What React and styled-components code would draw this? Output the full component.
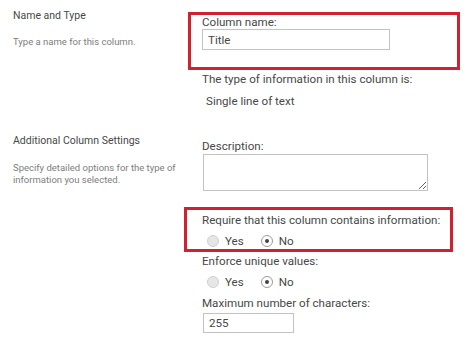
import React from 'react';
import styled, { createGlobalStyle } from 'styled-components';

const GlobalStyle = createGlobalStyle`
  html, body {
    margin: 0;
    padding: 0;
    background: #ffffff;
  }
  body {
    font-family: Roboto, "Open Sans", sans-serif;
    color: #444444;
  }
`;

const Page = styled.div`
  width: 474px;
  height: 348px;
  overflow: hidden;
`;

const Section = styled.section`
  display: grid;
  grid-template-columns: 184px 1fr;
  margin-top: ${(p) => p.$offset || 0}px;
`;

const SideColumn = styled.div`
  padding: ${(p) => p.$top || 0}px 0 0 13px;
`;

const SideTitle = styled.div`
  font-size: 10.5px;
  line-height: 16px;
  color: #474747;
`;

const SideText = styled.div`
  margin-top: ${(p) => p.$gap}px;
  font-size: 9.5px;
  line-height: 11.5px;
  color: #7d7d7d;
  width: 170px;
`;

const FieldColumn = styled.div`
  display: flex;
  flex-direction: column;
  align-items: flex-start;
  padding-top: ${(p) => p.$top || 0}px;
`;

const Highlight = styled.div`
  display: flex;
  flex-direction: column;
  align-items: flex-start;
  box-sizing: border-box;
  width: ${(p) => p.$width}px;
  margin: ${(p) => p.$gap || 0}px 0 0 ${(p) => p.$shift || 0}px;
  padding: ${(p) => p.$pad};
  border: 3px solid #d1202f;
`;

const Label = styled.div`
  font-size: 11.6px;
  line-height: ${(p) => p.$lh || 16}px;
  margin-top: ${(p) => p.$gap || 0}px;
  padding-left: ${(p) => p.$indent || 0}px;
  color: #474747;
  white-space: nowrap;
`;

const TextBox = styled.input`
  box-sizing: border-box;
  width: ${(p) => p.$width}px;
  height: ${(p) => p.$height}px;
  margin: ${(p) => p.$gap || 0}px 0 0 ${(p) => p.$indent || 0}px;
  padding: 0 5px;
  border: 1px solid #c2c2c2;
  font-family: Roboto, "Open Sans", sans-serif;
  font-size: 11.6px;
  color: #474747;
  background: #ffffff;
  outline: none;
`;

const TextArea = styled.textarea`
  box-sizing: border-box;
  width: 225px;
  height: 37px;
  margin: 0 0 0 19px;
  padding: 3px 5px;
  border: 1px solid #c2c2c2;
  font-family: Roboto, "Open Sans", sans-serif;
  font-size: 11.6px;
  resize: both;
  outline: none;
`;

const RadioRow = styled.div`
  display: flex;
  align-items: center;
  height: 16px;
  margin-top: 5px;
  padding-left: ${(p) => p.$indent}px;
`;

const RadioOption = styled.label`
  display: flex;
  align-items: center;
  gap: 6px;
  margin-right: 17px;
  font-size: 11.6px;
  color: #474747;
`;

const RadioDot = styled.span`
  position: relative;
  box-sizing: border-box;
  width: 12px;
  height: 12px;
  border-radius: 50%;
  border: 1px solid ${(p) => (p.$on ? '#9a9a9a' : '#cfcfcf')};
  background: ${(p) => (p.$on ? '#ffffff' : '#e6e6e6')};

  &::after {
    content: '';
    display: ${(p) => (p.$on ? 'block' : 'none')};
    position: absolute;
    left: 3px;
    top: 3px;
    width: 4px;
    height: 4px;
    border-radius: 50%;
    background: #444444;
  }
`;

const YesNo = ({ indent }) => (
  <RadioRow $indent={indent}>
    <RadioOption>
      <RadioDot />
      Yes
    </RadioOption>
    <RadioOption>
      <RadioDot $on />
      No
    </RadioOption>
  </RadioRow>
);

const App = () => (
  <Page>
    <GlobalStyle />
    <Section>
      <SideColumn $top={8}>
        <SideTitle>Name and Type</SideTitle>
        <SideText $gap={12}>Type a name for this column.</SideText>
      </SideColumn>
      <FieldColumn $top={12}>
        <Highlight $width={272} $shift={4} $pad="0 0 17px 11px">
          <Label $lh={14}>Column name:</Label>
          <TextBox $width={188} $height={21} defaultValue="Title" />
        </Highlight>
        <Label $indent={18} $gap={1}>The type of information in this column is:</Label>
        <Label $indent={22} $gap={6}>Single line of text</Label>
      </FieldColumn>
    </Section>
    <Section $offset={24}>
      <SideColumn>
        <SideTitle>Additional Column Settings</SideTitle>
        <SideText $gap={13}>Specify detailed options for the type of information you selected.</SideText>
      </SideColumn>
      <FieldColumn $top={5}>
        <Label $indent={18}>Description:</Label>
        <TextArea />
        <Highlight $width={269} $gap={16} $pad="2px 0 0 15px">
          <Label>Require that this column contains information:</Label>
          <YesNo indent={5} />
        </Highlight>
        <Label $indent={18} $gap={1}>Enforce unique values:</Label>
        <YesNo indent={23} />
        <Label $indent={18} $gap={5}>Maximum number of characters:</Label>
        <TextBox $width={91} $height={20} $gap={2} $indent={19} defaultValue="255" />
      </FieldColumn>
    </Section>
  </Page>
);

export default App;
